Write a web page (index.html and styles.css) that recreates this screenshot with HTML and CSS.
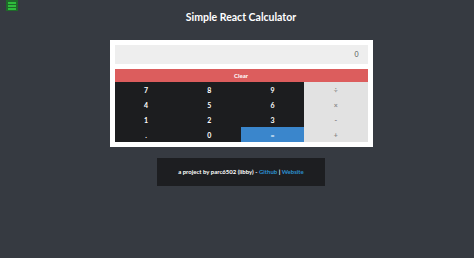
FILE: index.html
```html
<!DOCTYPE html>
<html lang="en">

<head>
    <meta charset="UTF-8">
    <meta name="viewport" content="width=device-width, initial-scale=1.0">
    <title>Simple React Calculator</title>
    <link rel="stylesheet" href="styles.css">
</head>

<body>
    <div class="corner">
        <span></span><span></span><span></span>
    </div>
    <h1 class="title">Simple React Calculator</h1>
    <div class="calc">
        <div class="display">0</div>
        <button class="clear">Clear</button>
        <div class="keys">
            <button class="num">7</button>
            <button class="num">8</button>
            <button class="num">9</button>
            <button class="op">÷</button>
            <button class="num">4</button>
            <button class="num">5</button>
            <button class="num">6</button>
            <button class="op">×</button>
            <button class="num">1</button>
            <button class="num">2</button>
            <button class="num">3</button>
            <button class="op">-</button>
            <button class="num">.</button>
            <button class="num">0</button>
            <button class="equals">=</button>
            <button class="op">+</button>
        </div>
    </div>
    <div class="footer">
        a project by parc6502 (libby) - <a href="#">Github</a> | <a href="#">Website</a>
    </div>
</body>

</html>
```

FILE: styles.css
```css
* {
    margin: 0;
    padding: 0;
    box-sizing: border-box;
}

body {
    height: 258px;
    padding-left: 8px;
    background: #363a41;
    font-family: Lato, "Liberation Sans", sans-serif;
    color: #fff;
}

.corner {
    position: absolute;
    left: 6px;
    top: 0;
    width: 12px;
    height: 11px;
    background: #1f6a2a;
    display: flex;
    flex-direction: column;
    justify-content: space-around;
    padding: 1px 2px;
}

.corner span {
    height: 2px;
    background: #2fbf3c;
}

.title {
    padding-top: 10px;
    font-size: 10.5px;
    line-height: 14px;
    font-weight: bold;
    text-align: center;
}

.calc {
    width: 263px;
    margin: 16px auto 0;
    padding: 5px;
    background: #fff;
}

.display {
    height: 19px;
    line-height: 19px;
    padding-right: 9px;
    background: #eee;
    color: #555;
    font-size: 7px;
    text-align: right;
}

button {
    border: none;
    outline: none;
    font-family: Lato, "Liberation Sans", sans-serif;
    font-weight: bold;
}

.clear {
    display: block;
    width: 100%;
    height: 13px;
    margin-top: 5px;
    background: #dc5d5d;
    color: #fff;
    font-size: 6px;
}

.keys {
    display: grid;
    grid-template-columns: repeat(4, 1fr);
    grid-auto-rows: 15px;
}

.num {
    background: #1c1d1f;
    color: #fff;
    font-size: 7px;
}

.op {
    background: #e2e2e2;
    color: #888;
    font-size: 7px;
}

.equals {
    background: #3a86cc;
    color: #fff;
    font-size: 7px;
}

.footer {
    width: 168px;
    height: 28px;
    margin: 11px auto 0;
    line-height: 28px;
    background: #1d1e21;
    font-size: 6px;
    font-weight: bold;
    text-align: center;
}

.footer a {
    color: #2b8fd0;
    text-decoration: none;
}
```
